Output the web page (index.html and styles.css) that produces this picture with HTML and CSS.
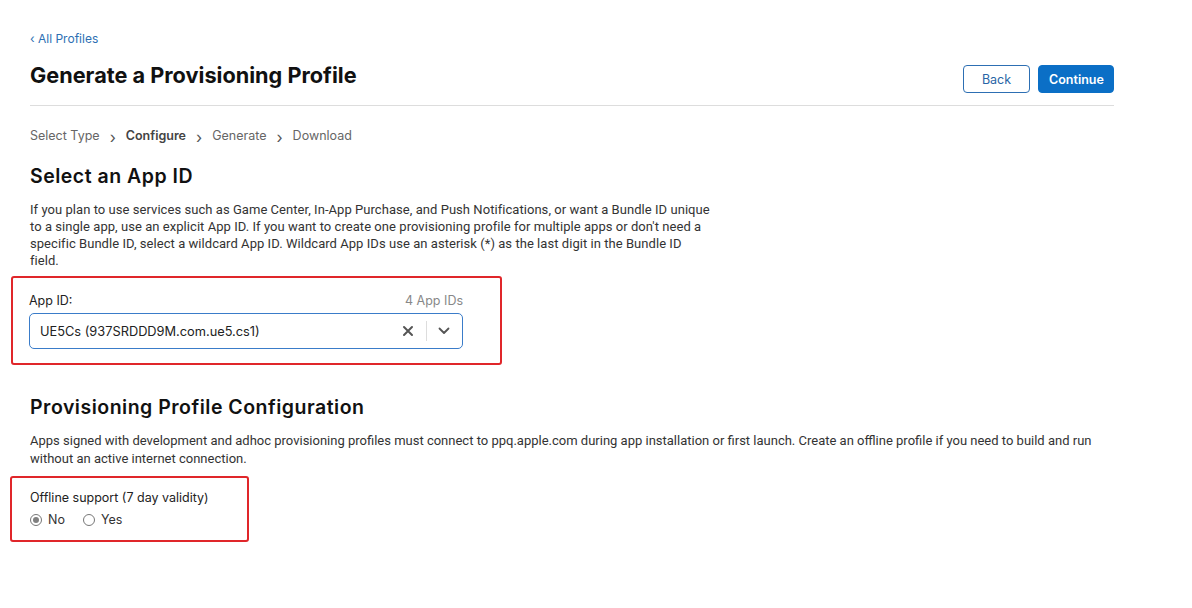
FILE: index.html
```html
<!DOCTYPE html>
<html>
<head>
<meta charset="UTF-8">
<title>Generate a Provisioning Profile</title>
<link rel="stylesheet" href="styles.css">
</head>
<body>
<div class="page">
	<a class="back-link" href="#">&lsaquo; All Profiles</a>
	<div class="header">
		<h1>Generate a Provisioning Profile</h1>
		<div class="actions">
			<button class="btn btn-secondary">Back</button>
			<button class="btn btn-primary">Continue</button>
		</div>
	</div>
	<div class="steps">
		<span>Select Type</span>
		<span class="sep">&rsaquo;</span>
		<span class="current">Configure</span>
		<span class="sep">&rsaquo;</span>
		<span>Generate</span>
		<span class="sep">&rsaquo;</span>
		<span>Download</span>
	</div>

	<h2>Select an App ID</h2>
	<p class="desc narrow">If you plan to use services such as Game Center, In-App Purchase, and Push Notifications, or want a Bundle ID unique to a single app, use an explicit App ID. If you want to create one provisioning profile for multiple apps or don't need a specific Bundle ID, select a wildcard App ID. Wildcard App IDs use an asterisk (*) as the last digit in the Bundle ID field.</p>

	<div class="mark mark-appid">
		<div class="field-head">
			<label>App ID:</label>
			<span class="count">4 App IDs</span>
		</div>
		<div class="select">
			<span class="value">UE5Cs (937SRDDD9M.com.ue5.cs1)</span>
			<span class="clear">
				<svg width="12" height="12" viewBox="0 0 12 12"><path d="M2 2L10 10M10 2L2 10" stroke="#555" stroke-width="2" stroke-linecap="round"/></svg>
			</span>
			<span class="divider"></span>
			<span class="caret">
				<svg width="12" height="8" viewBox="0 0 12 8"><path d="M1.5 1.5L6 6L10.5 1.5" fill="none" stroke="#555" stroke-width="1.8" stroke-linecap="round" stroke-linejoin="round"/></svg>
			</span>
		</div>
	</div>

	<h2 class="second">Provisioning Profile Configuration</h2>
	<p class="desc wide">Apps signed with development and adhoc provisioning profiles must connect to ppq.apple.com during app installation or first launch. Create an offline profile if you need to build and run without an active internet connection.</p>

	<div class="mark mark-offline">
		<div class="radio-title">Offline support (7 day validity)</div>
		<div class="radios">
			<label class="radio"><span class="dot checked"></span>No</label>
			<label class="radio"><span class="dot"></span>Yes</label>
		</div>
	</div>
</div>
</body>
</html>
```

FILE: styles.css
```css
body {
	margin: 0;
	background: #fff;
	font-family: Inter, "Noto Sans", sans-serif;
	color: #1d1d1f;
}
.page {
	width: 1084px;
	padding: 31px 0 0 30px;
}
.back-link {
	display: block;
	font-size: 12px;
	line-height: 16px;
	color: #2d6fb3;
	text-decoration: none;
}
.header {
	display: flex;
	align-items: flex-start;
	justify-content: space-between;
	border-bottom: 1px solid #ddd;
	padding: 11px 0 12px 0;
}
h1 {
	margin: 4px 0 0 0;
	font-size: 21.7px;
	line-height: 26px;
	font-weight: 700;
	color: #111;
}
.actions {
	display: flex;
	gap: 8px;
	padding-top: 7px;
}
.btn {
	height: 28px;
	border-radius: 4px;
	font-family: Inter, sans-serif;
	font-size: 12.5px;
	padding: 0 10px;
	cursor: pointer;
}
.btn-secondary {
	width: 67px;
	background: #fff;
	border: 1px solid #2d6fb3;
	color: #2a65a6;
}
.btn-primary {
	width: 76px;
	background: #0b6fc6;
	border: 1px solid #0b6fc6;
	color: #fff;
	font-weight: 600;
}
.steps {
	display: flex;
	align-items: center;
	margin-top: 20px;
	font-size: 12.5px;
	line-height: 16px;
	color: #666;
}
.steps .current {
	font-weight: 600;
	color: #444;
}
.steps .sep {
	font-size: 16px;
	margin: 3px 10px 0 10px;
	color: #555;
}
h2 {
	margin: 19px 0 0 0;
	font-size: 19.5px;
	line-height: 24px;
	font-weight: 600;
	letter-spacing: 0.5px;
	color: #111;
}
h2.second {
	margin-top: 30px;
}
.desc {
	margin: 13px 0 0 0;
	font-family: Roboto, sans-serif;
	font-size: 13px;
	line-height: 17px;
	color: #333;
}
.narrow {
	width: 680px;
	letter-spacing: 0.05px;
}
.wide {
	margin-top: 13px;
	line-height: 18px;
}
.mark {
	border: 2px solid #e0262a;
	border-radius: 3px;
	box-sizing: border-box;
}
.mark-appid {
	width: 491px;
	margin: 7px 0 0 -19px;
	padding: 15px 37px 14px 16px;
}
.field-head {
	display: flex;
	justify-content: space-between;
	align-items: flex-end;
	font-size: 12.5px;
	line-height: 16px;
	margin-bottom: 4px;
}
.field-head label {
	color: #222;
}
.field-head .count {
	color: #888;
}
.select {
	display: flex;
	align-items: center;
	height: 36px;
	box-sizing: border-box;
	border: 1.5px solid #3a7cc9;
	border-radius: 5px;
	padding: 0 12px 0 10px;
	font-size: 12.8px;
	color: #222;
}
.select .value {
	flex: 1;
}
.select .clear {
	display: flex;
	padding: 0 12px 0 0;
}
.select .divider {
	width: 1px;
	height: 20px;
	background: #ddd;
	margin-right: 11px;
}
.select .caret {
	display: flex;
}
.mark-offline {
	width: 239px;
	margin: 8px 0 0 -20px;
	padding: 12px 16px 12px 18px;
}
.radio-title {
	font-size: 12.5px;
	line-height: 16px;
	color: #222;
}
.radios {
	display: flex;
	gap: 18px;
	margin-top: 6px;
	font-size: 12.5px;
	line-height: 16px;
	color: #333;
}
.radio {
	display: flex;
	align-items: center;
	gap: 6px;
}
.dot {
	width: 12px;
	height: 12px;
	border: 1px solid #777;
	border-radius: 50%;
	box-sizing: border-box;
	position: relative;
}
.dot.checked::after {
	content: "";
	position: absolute;
	left: 2px;
	top: 2px;
	width: 6px;
	height: 6px;
	border-radius: 50%;
	background: #808080;
}
```
